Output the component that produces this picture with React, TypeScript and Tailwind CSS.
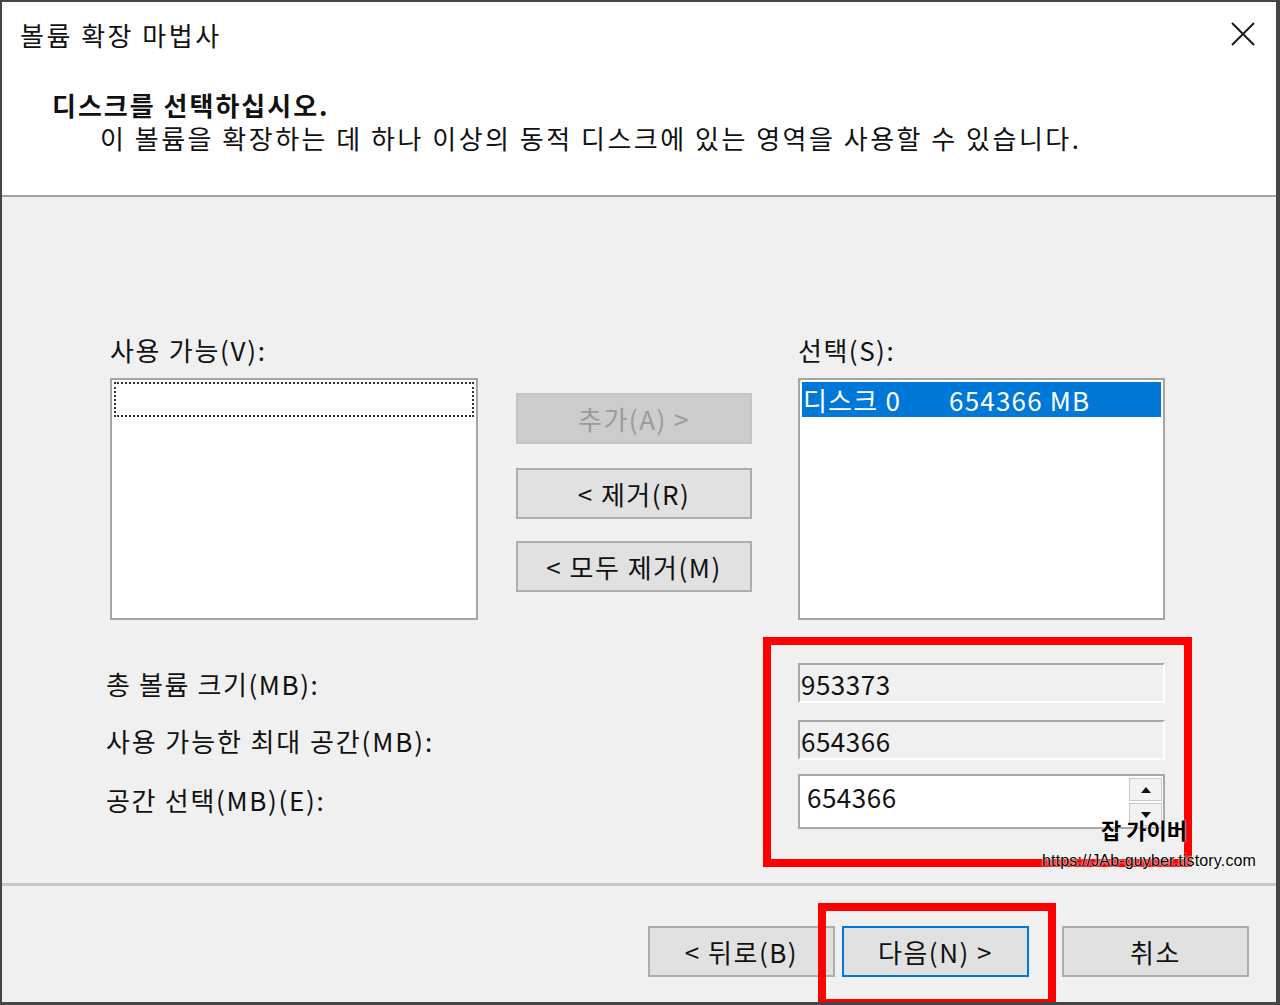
import React from "react";

const font = "font-['Noto_Sans_CJK_KR','Noto_Sans',sans-serif]";

function WinButton({
  children,
  width = "w-[236px]",
  disabled = false,
  primary = false,
}: {
  children: React.ReactNode;
  width?: string;
  disabled?: boolean;
  primary?: boolean;
}) {
  let look = "bg-[#e1e1e1] border-[#adadad] text-[#111]";
  if (disabled) look = "bg-[#cccccc] border-[#c4c4c4] text-[#9b9b9b]";
  if (primary) look = "bg-[#e1e1e1] border-[#0078d7] text-[#111]";
  return (
    <div
      className={`${width} h-[51px] border-2 ${look} flex items-center justify-center text-[26px] leading-none tracking-[1.5px]`}
    >
      {children}
    </div>
  );
}

function ReadOnlyField({ value }: { value: string }) {
  return (
    <div className="w-[367px] h-[40px] bg-[#f0f0f0] border-t-2 border-l-2 border-[#a8a8a8] border-r-2 border-r-white border-b-2 border-b-white flex items-center pl-[1px] text-[26px] tracking-[0.5px] text-[#111]">
      {value}
    </div>
  );
}

function Triangle({ up }: { up?: boolean }) {
  return (
    <svg width="12" height="8" viewBox="0 0 12 8">
      {up ? (
        <polygon points="6,1 11,7 1,7" fill="#111" />
      ) : (
        <polygon points="1,1 11,1 6,7" fill="#111" />
      )}
    </svg>
  );
}

export default function App() {
  return (
    <div
      className={`relative w-[1280px] h-[1005px] bg-[#f0f0f0] border-l-2 border-t-2 border-r-[4px] border-b-[3px] border-[#454545] flex flex-col overflow-hidden ${font} text-[#111]`}
    >
      {/* header */}
      <div className="h-[195px] bg-white border-b-2 border-[#a3a3a3] relative shrink-0">
        <div className="absolute left-[18px] top-[17px] text-[26px] leading-[32px] tracking-[2.5px]">
          볼륨 확장 마법사
        </div>
        <svg
          className="absolute right-[21px] top-[20px]"
          width="24"
          height="24"
          viewBox="0 0 24 24"
        >
          <path d="M1 1 L23 23 M23 1 L1 23" stroke="#1a1a1a" strokeWidth="2" />
        </svg>
        <div className="pl-[50px] pt-[87px] text-[26px] leading-[32px] font-bold tracking-[2px]">
          디스크를 선택하십시오.
        </div>
        <div className="pl-[98px] pt-[1px] text-[26px] leading-[32px] tracking-[2.5px]">
          이 볼륨을 확장하는 데 하나 이상의 동적 디스크에 있는 영역을 사용할 수 있습니다.
        </div>
      </div>

      {/* body */}
      <div className="flex-1 flex flex-col pt-[137px] border-b-[3px] border-[#c8c8c8]">
        <div className="flex pl-[108px]">
          {/* available */}
          <div className="flex flex-col w-[368px]">
            <div className="text-[26px] leading-[32px] h-[32px] tracking-[1.7px]">사용 가능(V):</div>
            <div className="mt-[12px] h-[242px] bg-white border-2 border-[#a5a5a5] p-[2px]">
              <div className="h-[35px] border-2 border-dotted border-[#333]" />
            </div>
          </div>

          {/* middle buttons */}
          <div className="flex flex-col ml-[38px] pt-[59px]">
            <WinButton disabled>추가(A) &gt;</WinButton>
            <div className="mt-[24px]">
              <WinButton>&lt; 제거(R)</WinButton>
            </div>
            <div className="mt-[22px]">
              <WinButton>&lt; 모두 제거(M)</WinButton>
            </div>
          </div>

          {/* selected */}
          <div className="flex flex-col w-[367px] ml-[46px]">
            <div className="text-[26px] leading-[32px] h-[32px] tracking-[1.5px]">선택(S):</div>
            <div className="mt-[12px] h-[242px] bg-white border-2 border-[#a5a5a5] p-[2px]">
              <div className="h-[35px] bg-[#0078d7] text-white text-[26px] flex items-center pl-[1px] tracking-[1.2px]">
                <span className="w-[146px]">디스크 0</span>
                <span>654366 MB</span>
              </div>
            </div>
          </div>
        </div>

        {/* size rows */}
        <div className="flex flex-col pl-[104px] mt-[43px]">
          <div className="flex items-center">
            <div className="w-[692px] text-[26px] tracking-[1.6px]">총 볼륨 크기(MB):</div>
            <ReadOnlyField value="953373" />
          </div>
          <div className="flex items-center mt-[17px]">
            <div className="w-[692px] text-[26px] tracking-[1.9px]">사용 가능한 최대 공간(MB):</div>
            <ReadOnlyField value="654366" />
          </div>
          <div className="flex items-center mt-[14px]">
            <div className="w-[692px] text-[26px] pb-[4px] tracking-[1.7px]">공간 선택(MB)(E):</div>
            <div className="w-[367px] h-[55px] bg-white border-2 border-[#a8a8a8] flex">
              <div className="flex-1 pl-[7px] pt-[3px] text-[26px] leading-[36px] tracking-[0.5px]">654366</div>
              <div className="flex flex-col w-[34px] pt-[2px] pr-[1px] gap-[2px]">
                <div className="h-[23px] border border-[#c9c9c9] bg-[#f3f3f3] flex items-center justify-center">
                  <Triangle up />
                </div>
                <div className="h-[23px] border border-[#c9c9c9] bg-[#f3f3f3] flex items-center justify-center">
                  <Triangle />
                </div>
              </div>
            </div>
          </div>
        </div>
      </div>

      {/* footer */}
      <div className="h-[116px] shrink-0 flex items-start justify-end pt-[40px] pr-[27px]">
        <WinButton width="w-[187px]">&lt; 뒤로(B)</WinButton>
        <div className="ml-[7px]">
          <WinButton width="w-[187px]" primary>
            다음(N) &gt;
          </WinButton>
        </div>
        <div className="ml-[33px]">
          <WinButton width="w-[187px]">취소</WinButton>
        </div>
      </div>

      {/* annotations */}
      <div className="absolute left-[761px] top-[635px] w-[429px] h-[230px] border-[8px] border-[#ff0000]" />
      <div className="absolute left-[816px] top-[901px] w-[238px] h-[104px] border-[8px] border-[#ff0000]" />
      <div className="absolute left-[1099px] top-[812px] text-[22px] leading-[30px] font-bold text-black [text-shadow:0_0_2px_white,0_0_2px_white]">
        잡 가이버
      </div>
      <div className="absolute left-[1040px] top-[848px] text-[16px] leading-[22px] tracking-[0.15px] text-black font-['Liberation_Sans',sans-serif] [text-shadow:0_0_2px_white,0_0_2px_white]">
        https://JAb-guyber.tistory.com
      </div>
    </div>
  );
}
